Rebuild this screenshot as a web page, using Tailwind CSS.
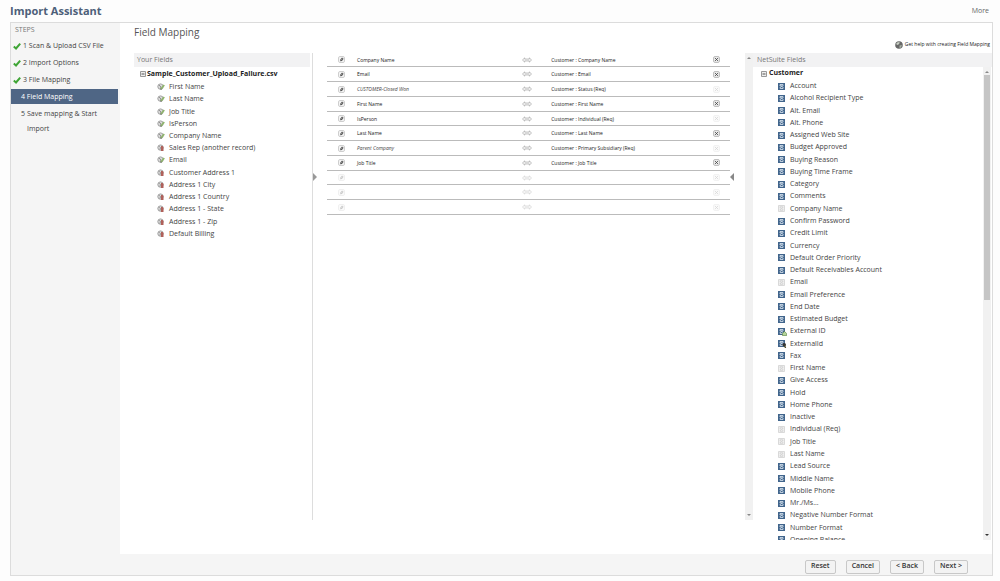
<!DOCTYPE html>
<html lang="en">
<head>
    <meta charset="UTF-8">
    <meta name="viewport" content="width=device-width, initial-scale=1.0">
    <title>Import Assistant</title>
    <script src="https://cdn.jsdelivr.net/npm/@tailwindcss/browser@4"></script>
</head>
<body class="flex flex-col min-h-screen bg-[#fdfdfd] pl-2 pr-[7px] pb-[6px] font-['Open_Sans',sans-serif] text-[7px] text-[#444]">
    <!-- icons -->
    <svg class="hidden">
        <symbol id="check" viewBox="0 0 8 8"><path d="M.8 4.6 3 6.5 7.2 1.6" fill="none" stroke="#3fa535" stroke-width="2"/></symbol>
        <symbol id="minus" viewBox="0 0 6 6"><path d="M.5.5h5v5h-5z" fill="#eee" stroke="#999"/><path d="M1.5 3h3" stroke="#555"/></symbol>
        <symbol id="mapped" viewBox="0 0 8 8"><circle cx="3.5" cy="3.6" r="2.7" fill="#ddd" stroke="#999" stroke-width=".9"/><path d="M2 2.2 4 3.8 3.4 5.8" fill="none" stroke="#777" stroke-width=".8"/><path d="M4 6 7.2 2" stroke="#8fb56c" stroke-width="1.8"/><path d="m3.5 7 .4-1.5 1 .8z" fill="#555"/></symbol>
        <symbol id="unmapped" viewBox="0 0 8 8"><circle cx="3.5" cy="3.6" r="2.7" fill="#ddd" stroke="#999" stroke-width=".9"/><path d="M2 2.2 3.4 3.6 3 5.6" fill="none" stroke="#777" stroke-width=".8"/><path d="M4 2h1.7l.8 1v4H4z" fill="#b0605a"/></symbol>
        <symbol id="record" viewBox="0 0 7 7"><path d="M0 0h7v7H0z" fill="#41658c"/><path d="M2 3V1.5h3V3L2.2 4v1.5H5V4M2.2 2.2l2 1" fill="none" stroke="#dbe6f0" stroke-width=".8"/></symbol>
        <symbol id="record-off" viewBox="0 0 7 7"><path d="M.5.5h6v6h-6z" fill="#f0f0f0" stroke="#d0d0d0" stroke-width=".8"/><path d="M2.2 3V1.8h2.6V3L2.3 4v1.3h2.5V4" fill="none" stroke="#c4c4c4" stroke-width=".6"/></symbol>
        <symbol id="edit" viewBox="0 0 7 7"><rect x=".5" y=".5" width="6" height="6" rx="1.5" fill="#f4f4f4" stroke="#bbb" stroke-width=".7"/><path d="M2 5.3 2.4 3.4 4 1.6 5.6 2.7 4 4.9z" fill="#555"/><path d="M3 4.2 4.3 2.8" stroke="#ddd" stroke-width=".5"/></symbol>
        <symbol id="remove" viewBox="0 0 7 7"><rect x=".6" y=".6" width="5.8" height="5.8" rx="1.3" fill="#eee" stroke="#aaa" stroke-width=".8"/><path d="m2.2 2.2 2.6 2.6m0-2.6L2.2 4.8" stroke="#444" stroke-width="1"/></symbol>
        <symbol id="swap" viewBox="0 0 10 6"><path d="M.5 3 2.7.9v1.2h4.6V.9L9.5 3 7.3 5.1V3.9H2.7v1.2z" fill="#fff" stroke="#aaa" stroke-width=".8"/></symbol>
        <symbol id="globe" viewBox="0 0 8 8"><circle cx="4" cy="4" r="3.8" fill="#686868"/><path d="M1 3Q2 .9 4.6 1L4.2 3 2.5 4z" fill="#c8d0c4"/><path d="M4.5 4.6 6.9 3.9 6 6.4 4.5 6.9z" fill="#a9b3a5"/></symbol>
    </svg>

    <header class="flex h-[22px] items-center justify-between pl-0.5">
        <h1 class="text-[11px] font-bold text-[#4d5f79] leading-5">Import Assistant</h1>
        <a href="#" class="px-1 text-[#666]">More</a>
    </header>

    <main class="ml-0.5 flex grow flex-col border border-[#dcdcdc] bg-[#f5f5f5]">
        <div class="flex grow">
            <nav class="w-[109px] shrink-0 leading-[17px]">
                <h2 class="px-1 leading-[14px] text-[#777]">STEPS</h2>
                <ol class="mr-0.5">
                    <li class="flex items-center gap-0.5 px-0.5"><svg class="size-2"><use href="#check"/></svg><a href="#">1 Scan &amp; Upload CSV File</a></li>
                    <li class="flex items-center gap-0.5 px-0.5"><svg class="size-2"><use href="#check"/></svg><a href="#">2 Import Options</a></li>
                    <li class="flex items-center gap-0.5 px-0.5"><svg class="size-2"><use href="#check"/></svg><a href="#">3 File Mapping</a></li>
                    <li class="my-px bg-[#4f6685] px-2.5 leading-[15px] text-white">4 Field Mapping</li>
                    <li class="flex gap-0.5 px-2.5"><span>5</span><span class="w-20 leading-[15px] pt-px">Save mapping &amp; Start Import</span></li>
                </ol>
            </nav>

            <section class="flex min-w-0 grow flex-col bg-white">
                <h2 class="h-[18px] px-3.5 text-[10px] leading-[18px] text-[#555]">Field Mapping</h2>
                <a href="#" class="mb-1 flex h-2 items-center gap-0.5 self-end pr-0.5 text-[5px] text-[#222]"><svg class="size-2"><use href="#globe"/></svg>Get help with creating Field Mapping</a>

                <div class="flex grow pl-3.5">
                    <div class="mb-[34px] flex w-[179px] shrink-0 flex-col border-r border-[#ddd]">
                        <h3 class="mr-0.5 bg-[#f2f2f3] px-[3px] leading-[14px] text-[#777]">Your Fields</h3>
                        <p class="flex h-3.5 items-center gap-px px-1.5 font-bold text-[#222]"><svg class="size-1.5"><use href="#minus"/></svg>Sample_Customer_Upload_Failure.csv</p>
                        <ul id="your-fields" class="grid h-[159px] auto-rows-fr"></ul>
                    </div>
                    <button aria-label="Collapse your fields" class="mt-[120px] h-2 w-1 shrink-0"><svg class="h-2 w-1" viewBox="0 0 4 8"><path d="M0 0 4 4 0 8z" fill="#999"/></svg></button>
                    <div class="min-w-0 grow pl-2.5">
                        <table class="h-[162px] w-full table-fixed border-collapse text-[5px] leading-[8px] text-[#222]">
                            <colgroup><col class="w-[30px]"><col class="w-[41%]"><col class="w-[29px]"><col><col class="w-[28px]"></colgroup>
                            <tbody id="mappings"></tbody>
                        </table>
                    </div>
                    <button aria-label="Collapse NetSuite fields" class="mt-[120px] h-2 w-1 shrink-0"><svg class="h-2 w-1" viewBox="0 0 4 8"><path d="M4 0 0 4 4 8z" fill="#888"/></svg></button>
                    <div class="mb-[34px] ml-[11px] flex w-2 shrink-0 flex-col items-center justify-between bg-[#f1f1f1] py-1">
                        <svg class="h-0.5 w-1" viewBox="0 0 4 2"><path d="M0 2 2 0 4 2z" fill="#888"/></svg>
                        <svg class="h-0.5 w-1" viewBox="0 0 4 2"><path d="M0 0 2 2 4 0z" fill="#888"/></svg>
                    </div>
                    <div class="mb-3.5 flex w-[239px] shrink-0 flex-col">
                        <h3 class="bg-[#f2f2f3] px-1 leading-[14px] text-[#777]">NetSuite Fields</h3>
                        <div class="flex grow pr-px">
                            <div class="grow">
                                <p class="flex h-[13px] items-center gap-0.5 px-2 font-bold text-[#222]"><svg class="size-1.5"><use href="#minus"/></svg>Customer</p>
                                <div class="h-[460px] overflow-hidden">
                                    <ul id="netsuite-fields" class="grid h-[466px] auto-rows-fr"></ul>
                                </div>
                            </div>
                            <div class="flex w-2 flex-col items-center bg-[#f1f1f1] py-1">
                                <svg class="h-0.5 w-1" viewBox="0 0 4 2"><path d="M0 2 2 0 4 2z" fill="#888"/></svg>
                                <div class="mt-0.5 h-[225px] w-1.5 bg-[#c5c5c5]"></div>
                                <svg class="mt-auto h-0.5 w-1" viewBox="0 0 4 2"><path d="M0 0 2 2 4 0z" fill="#333"/></svg>
                            </div>
                        </div>
                    </div>
                </div>
            </section>
            <div class="w-0.5"></div>
        </div>

        <footer class="flex h-[21px] items-center justify-end gap-2.5 px-6 pt-1 font-semibold text-[#333]">
            <button class="h-3.5 rounded-xs border border-[#c8c8c8] bg-[#f3f3f3] px-[5px]">Reset</button>
            <button class="h-3.5 rounded-xs border border-[#c8c8c8] bg-[#f3f3f3] px-[5px]">Cancel</button>
            <button class="h-3.5 rounded-xs border border-[#c8c8c8] bg-[#f3f3f3] px-[5px]">&lt; Back</button>
            <button class="h-3.5 rounded-xs border border-[#c8c8c8] bg-[#f3f3f3] px-[5px]">Next &gt;</button>
        </footer>
    </main>

    <script>
        const yourFields = [
            ["First Name", 1], ["Last Name", 1], ["Job Title", 1], ["IsPerson", 1], ["Company Name", 1],
            ["Sales Rep (another record)", 0], ["Email", 1], ["Customer Address 1", 0], ["Address 1 City", 0],
            ["Address 1 Country", 0], ["Address 1 - State", 0], ["Address 1 - Zip", 0], ["Default Billing", 0],
        ];

        const mappings = [
            ["Company Name", "Company Name"], ["Email", "Email"], ["CUSTOMER-Closed Won", "Status (Req)"],
            ["First Name", "First Name"], ["IsPerson", "Individual (Req)"], ["Last Name", "Last Name"],
            ["Parent Company", "Primary Subsidiary (Req)"], ["Job Title", "Job Title"], ["", ""], ["", ""], ["", ""],
        ];

        const netsuiteFields = [
            "Account", "Alcohol Recipient Type", "Alt. Email", "Alt. Phone", "Assigned Web Site", "Budget Approved",
            "Buying Reason", "Buying Time Frame", "Category", "Comments", "Company Name", "Confirm Password",
            "Credit Limit", "Currency", "Default Order Priority", "Default Receivables Account", "Email",
            "Email Preference", "End Date", "Estimated Budget", "External ID", "ExternalId", "Fax", "First Name",
            "Give Access", "Hold", "Home Phone", "Inactive", "Individual (Req)", "Job Title", "Last Name",
            "Lead Source", "Middle Name", "Mobile Phone", "Mr./Ms...", "Negative Number Format", "Number Format",
            "Opening Balance",
        ];

        // Fields that are already mapped are greyed out
        const used = ["Company Name", "Email", "First Name", "Individual (Req)", "Job Title", "Last Name"];
        const badges = {
            "External ID": '<svg class="absolute left-1 top-[3px] size-[5px]" viewBox="0 0 5 5"><path d="M2.5.4 4.7 2.6V4.6H.5V2.6z" fill="#b5d49a" stroke="#5f8648" stroke-width=".7"/></svg>',
            "ExternalId": '<svg class="absolute left-1 top-[3px] size-[5px]" viewBox="0 0 5 5"><circle cx="2.2" cy="1.8" r="1.8" fill="#333"/><path d="M2.5 2.5 3.6 5" stroke="#4d4a2a" stroke-width="1.3"/></svg>',
        };

        document.getElementById("your-fields").innerHTML = yourFields.map(([name, mapped]) =>
            `<li class="flex items-center gap-1 pl-[23px] leading-3"><svg class="size-2"><use href="#${mapped ? "mapped" : "unmapped"}"/></svg>${name}</li>`
        ).join("");

        document.getElementById("mappings").innerHTML = mappings.map(([from, to]) => {
            const faded = from ? "" : "opacity-30";
            const custom = from === "CUSTOMER-Closed Won" || from === "Parent Company";
            const locked = !to || to.includes("(Req)");
            return `<tr class="border-b border-[#bbb]">
                <td class="pl-[11px]"><button aria-label="Edit" class="block ${faded}"><svg class="size-[7px]"><use href="#edit"/></svg></button></td>
                <td class="${custom ? "italic text-[#444]" : ""}">${from || "&nbsp;"}</td>
                <td><svg class="h-1.5 w-2.5 ${from ? "" : "opacity-50"}"><use href="#swap"/></svg></td>
                <td class="whitespace-nowrap">${to ? "Customer : " + to : ""}</td>
                <td class="pl-[11px]"><button aria-label="Remove" class="block ${locked ? "opacity-20" : ""}"><svg class="size-[7px]"><use href="#remove"/></svg></button></td>
            </tr>`;
        }).join("");

        document.getElementById("netsuite-fields").innerHTML = netsuiteFields.map((name) =>
            `<li class="flex items-center gap-[5px] pl-[25px] leading-3"><span class="relative"><svg class="size-[7px]"><use href="#${used.includes(name) ? "record-off" : "record"}"/></svg>${badges[name] || ""}</span>${name}</li>`
        ).join("");
    </script>
</body>
</html>
